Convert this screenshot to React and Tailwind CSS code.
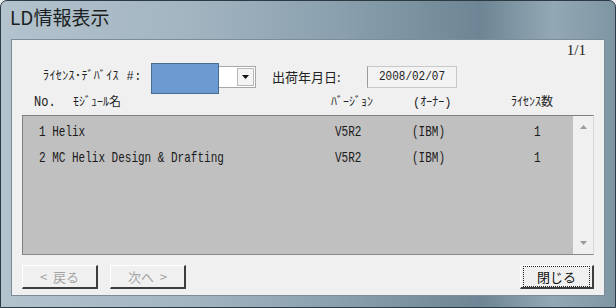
import React from "react";

const mono = "font-['Liberation_Mono','Noto_Sans_CJK_JP',monospace]";
const cjk = "font-['Noto_Sans_CJK_JP','Noto_Sans',sans-serif]";

function Btn({ children, disabled, focused, className = "" }) {
  return (
    <div
      className={`flex h-[24px] items-center justify-center border-t border-l border-t-white border-l-white border-r-2 border-b-2 border-r-[#3c3c3c] border-b-[#3c3c3c] bg-[#f0f0f0] ${className}`}
    >
      <div
        className={`flex h-full w-full items-center justify-center whitespace-pre ${cjk} text-[13px] leading-none ${
          disabled ? "text-[#a3a3a3]" : "text-[#111]"
        } ${focused ? "m-[2px] border border-dotted border-[#222]" : ""}`}
      >
        {children}
      </div>
    </div>
  );
}

export default function App() {
  return (
    <div className="w-[616px] h-[308px] overflow-hidden bg-[#e9eef1]">
      <div className="flex h-[308px] w-[616px] flex-col rounded-t-[7px] border border-[#2c3a44] bg-[linear-gradient(to_right,#b3c3ce_0%,#a3b5c1_30%,#8aa0ae_55%,#6d8594_78%,#93a8b5_90%,#7e95a3_100%)]">
        <div className={`flex h-[38px] items-start pl-[9px] pt-[3px] ${cjk} text-[19px] leading-[26px] text-[#1b1f22]`}>
          LD情報表示
        </div>
        <div className="mx-[10px] mb-[11px] flex flex-1 flex-col border border-[#7a8d99] bg-[#f0f0f0]">
          {/* page counter */}
          <div className="flex h-[21px] justify-end pr-[18px] pt-[3px]">
            <span className="font-['Liberation_Serif',serif] text-[15px] leading-[15px] text-[#222]">1/1</span>
          </div>
          {/* license row */}
          <div className="flex h-[31px] items-center">
            <span className={`ml-[31px] w-[108px] shrink-0 whitespace-pre ${mono} text-[12px] leading-none text-[#222] tracking-[0.4px]`}>
              ﾗｲｾﾝｽ･ﾃﾞﾊﾞｲｽ #:
            </span>
            <div className="relative h-[22px] w-[105px] shrink-0 border border-[#a8a8a8] bg-white">
              <div className="absolute left-[-1px] top-[-4px] h-[31px] w-[68px] border border-[#4a6c92] bg-[#6c9bd2]" />
              <div className="absolute right-[1px] top-[1px] flex h-[18px] w-[17px] items-center justify-center border border-[#b9b9b9] bg-[#f4f4f4]">
                <svg width="7" height="4" viewBox="0 0 7 4">
                  <path d="M0 0H7L3.5 4Z" fill="#111" />
                </svg>
              </div>
            </div>
            <span className={`ml-[16px] w-[95px] ${cjk} text-[13px] leading-none text-[#222]`}>出荷年月日:</span>
            <div className="flex h-[22px] w-[90px] items-center justify-center border border-[#c8c8c8] border-l-[#9a9a9a] bg-[#f3f3f3]">
              <span className={`inline-block scale-y-[1.2] ${mono} text-[11px] leading-none text-[#222]`}>2008/02/07</span>
            </div>
          </div>
          {/* header */}
          <div className={`flex h-[21px] items-center ${mono} text-[12px] leading-none text-[#222]`}>
            <span className="ml-[22px] w-[39px] inline-block scale-y-[1.15]">No.</span>
            <span className="w-[258px]">ﾓｼﾞｭｰﾙ名</span>
            <span className="w-[82px]">ﾊﾞｰｼﾞｮﾝ</span>
            <span className="w-[98px]">(ｵｰﾅｰ)</span>
            <span>ﾗｲｾﾝｽ数</span>
          </div>
          {/* list */}
          <div className="mx-[10px] mt-[2px] flex h-[140px] border border-[#7f7f7f] border-r-[#d8d8d8] border-b-[#8a8a8a] bg-[#c0c0c0]">
            <div className={`flex-1 pt-[3px] ${mono} text-[11px] leading-none text-[#1a1a1a]`}>
              {[
                ["1 Helix", "V5R2", "(IBM)", "1"],
                ["2 MC Helix Design & Drafting", "V5R2", "(IBM)", "1"],
              ].map((r, i) => (
                <div key={i} className="flex h-[26px] items-center scale-y-[1.25] origin-center">
                  <span className="ml-[16px] w-[296px] whitespace-pre">{r[0]}</span>
                  <span className="w-[77px]">{r[1]}</span>
                  <span className="w-[122px]">{r[2]}</span>
                  <span>{r[3]}</span>
                </div>
              ))}
            </div>
            <div className="flex w-[20px] flex-col items-center justify-between bg-[#f0f0f0] py-[9px]">
              <svg width="7" height="4" viewBox="0 0 7 4">
                <path d="M0 4H7L3.5 0Z" fill="#9a9a9a" />
              </svg>
              <svg width="7" height="4" viewBox="0 0 7 4">
                <path d="M0 0H7L3.5 4Z" fill="#9a9a9a" />
              </svg>
            </div>
          </div>
          {/* buttons */}
          <div className="mt-[10px] flex px-[10px]">
            <Btn disabled className="w-[76px]">
              {"<  戻る"}
            </Btn>
            <Btn disabled className="ml-[12px] w-[76px]">
              {"次へ  >"}
            </Btn>
            <div className="flex-1" />
            <Btn focused className="w-[74px]">
              閉じる
            </Btn>
          </div>
        </div>
      </div>
    </div>
  );
}
